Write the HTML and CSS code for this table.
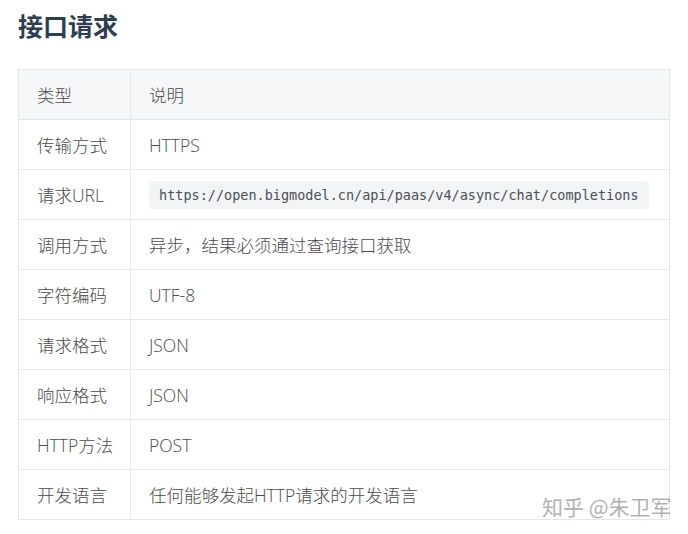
FILE: index.html
```html
<!DOCTYPE html>
<html lang="zh">
<head>
<meta charset="utf-8">
<link rel="stylesheet" href="styles.css">
</head>
<body>
<div class="page">
  <h2 class="title">接口请求</h2>
  <table class="spec">
    <colgroup><col class="c1"><col class="c2"></colgroup>
    <thead>
      <tr><th>类型</th><th>说明</th></tr>
    </thead>
    <tbody>
      <tr><td>传输方式</td><td>HTTPS</td></tr>
      <tr><td>请求URL</td><td><code class="url">https://open.bigmodel.cn/api/paas/v4/async/chat/completions</code></td></tr>
      <tr><td>调用方式</td><td>异步，结果必须通过查询接口获取</td></tr>
      <tr><td>字符编码</td><td>UTF-8</td></tr>
      <tr><td>请求格式</td><td>JSON</td></tr>
      <tr><td>响应格式</td><td>JSON</td></tr>
      <tr><td>HTTP方法</td><td>POST</td></tr>
      <tr><td>开发语言</td><td>任何能够发起HTTP请求的开发语言</td></tr>
    </tbody>
  </table>
  <div class="mark">知乎 @朱卫军</div>
</div>
</body>
</html>
```
FILE: styles.css
```css
html, body {
  margin: 0;
  padding: 0;
  background: #fff;
}
.page {
  position: relative;
  width: 688px;
  height: 534px;
  padding: 8px 0 0 18px;
  box-sizing: border-box;
  font-family: "Open Sans", "Noto Sans CJK SC", sans-serif;
  color: #4a4a4a;
}
.title {
  margin: 0;
  font-size: 25px;
  line-height: 34px;
  font-weight: 700;
  color: #2c3e50;
  font-family: "Noto Sans CJK SC", sans-serif;
}
.spec {
  margin-top: 27px;
  border-collapse: collapse;
  table-layout: fixed;
  width: 652px;
  font-size: 17.5px;
}
.spec .c1 {
  width: 112px;
}
.spec th, .spec td {
  border: 1px solid #e4e6e8;
  height: 50px;
  padding: 0 18px;
  text-align: left;
  font-weight: 300;
  box-sizing: border-box;
  line-height: 24px;
  vertical-align: middle;
  white-space: nowrap;
}
.spec thead th {
  background: #f6f7f8;
}
.url {
  display: inline-block;
  background: #f3f4f5;
  border-radius: 3px;
  padding: 5px 10px;
  font-family: "DejaVu Sans Mono", monospace;
  font-size: 13.5px;
  line-height: 18px;
  color: #4a5058;
}
.mark {
  position: absolute;
  left: 542px;
  top: 493px;
  font-size: 21px;
  line-height: 26px;
  color: rgba(150, 150, 150, 0.75);
  font-family: "Noto Sans CJK SC", sans-serif;
}
```
